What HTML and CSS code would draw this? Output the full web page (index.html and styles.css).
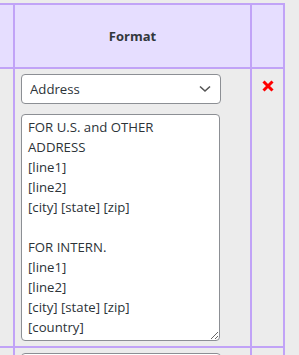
FILE: index.html
```html
<!DOCTYPE html>
<html lang="en">
<head>
  <meta charset="UTF-8">
  <title>Address Formats</title>
  <link rel="stylesheet" href="styles.css">
</head>
<body>
  <div class="wrap">
    <table class="formats">
      <thead>
        <tr>
          <th class="col-edge"></th>
          <th class="col-format">Format</th>
          <th class="col-action"></th>
        </tr>
      </thead>
      <tbody>
        <tr>
          <td class="col-edge"></td>
          <td class="col-format">
            <select class="field-select">
              <option>Address</option>
              <option>Phone</option>
              <option>Email</option>
            </select>
            <textarea class="field-text" rows="11">FOR U.S. and OTHER ADDRESS
[line1]
[line2]
[city] [state] [zip]

FOR INTERN.
[line1]
[line2]
[city] [state] [zip]
[country]</textarea>
          </td>
          <td class="col-action">
            <a class="remove" href="#" title="Remove">
              <svg width="12" height="12" viewBox="0 0 12 12"><path d="M1.5 1.5 L10.5 10.5 M10.5 1.5 L1.5 10.5" stroke="#f00" stroke-width="3" fill="none"/></svg>
            </a>
          </td>
        </tr>
        <tr>
          <td class="col-edge"></td>
          <td class="col-format">
            <select class="field-select">
              <option>Address</option>
            </select>
          </td>
          <td class="col-action"></td>
        </tr>
      </tbody>
    </table>
  </div>
</body>
</html>
```

FILE: styles.css
```css
body { margin: 0; background: #ececec; font-family: "Open Sans", "Noto Sans", sans-serif; color: #2c3338; }
.wrap { padding-top: 3px; }
.formats { width: 285px; table-layout: fixed; border-collapse: separate; border-spacing: 0; border-top: 2px solid #c1a3f7; }
.formats th, .formats td { box-sizing: border-box; border-right: 2px solid #c1a3f7; border-bottom: 2px solid #c1a3f7; padding: 0; }
.formats th { background: #e6deff; height: 64px; font-size: 13px; font-weight: 700; color: #32373c; text-align: center; vertical-align: middle; }
.formats td { vertical-align: top; }
.col-edge { width: 15px; }
.col-format { width: 237px; }
.col-action { width: 33px; }
td.col-format { padding: 5px 6px 5px; }
td.col-action { text-align: center; padding-top: 6px; }
.field-select { display: block; box-sizing: border-box; width: 200px; height: 30px; margin: 0; padding: 0 24px 0 8px; border: 1px solid #8c8f94; border-radius: 4px; background: #fff url("data:image/svg+xml,%3Csvg xmlns='http://www.w3.org/2000/svg' width='12' height='8' viewBox='0 0 12 8'%3E%3Cpath d='M1 1.5 L6 6 L11 1.5' stroke='%23555' stroke-width='1.6' fill='none'/%3E%3C/svg%3E") no-repeat right 9px center; -webkit-appearance: none; appearance: none; font-family: inherit; font-size: 13.2px; color: #2c3338; }
.field-text { display: block; box-sizing: border-box; width: 199px; height: 227px; margin: 10px 0 0; padding: 2px 6px; border: 1px solid #8c8f94; border-radius: 4px; background: #fff; font-family: inherit; font-size: 13.2px; line-height: 20px; color: #2c3338; }
.remove { display: inline-block; width: 12px; height: 12px; }
.remove svg { display: block; }
```
